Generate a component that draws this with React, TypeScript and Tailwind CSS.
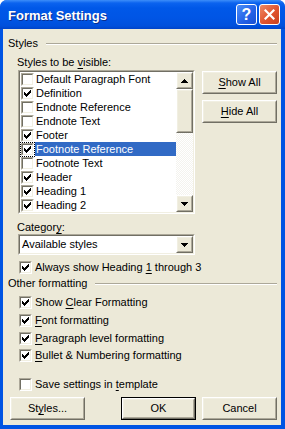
import React from "react";

const font = "font-['Liberation_Sans',Arial,sans-serif]";

function U({ children }: { children: React.ReactNode }) {
  return <span className="underline decoration-1 underline-offset-[2px]">{children}</span>;
}

function CheckMark() {
  return (
    <svg width="7" height="7" viewBox="0 0 7 7" shapeRendering="crispEdges">
      <path
        d="M0 2h1v3h-1z M1 3h1v3h-1z M2 4h1v3h-1z M3 3h1v3h-1z M4 2h1v3h-1z M5 1h1v3h-1z M6 0h1v3h-1z"
        fill="#000"
      />
    </svg>
  );
}

function Arrow({ up }: { up?: boolean }) {
  return (
    <svg width="7" height="4" viewBox="0 0 7 4" shapeRendering="crispEdges">
      <path
        d={up ? "M3 0h1v1h-1z M2 1h3v1h-3z M1 2h5v1h-5z M0 3h7v1h-7z" : "M0 0h7v1h-7z M1 1h5v1h-5z M2 2h3v1h-3z M3 3h1v1h-1z"}
        fill="#000"
      />
    </svg>
  );
}

function Checkbox({ checked }: { checked?: boolean }) {
  return (
    <div className="w-[13px] h-[13px] shrink-0 border border-t-[#aca899] border-l-[#aca899] border-b-white border-r-white">
      <div className="w-full h-full border border-t-[#716f64] border-l-[#716f64] border-b-[#f1efe2] border-r-[#f1efe2] bg-white flex items-center justify-center">
        {checked && <CheckMark />}
      </div>
    </div>
  );
}

function Raised({ className, children }: { className?: string; children?: React.ReactNode }) {
  return (
    <div className={`border border-t-white border-l-white border-b-[#716f64] border-r-[#716f64] bg-[#ece9d8] ${className ?? ""}`}>
      <div className="w-full h-full border border-t-[#f1efe2] border-l-[#f1efe2] border-b-[#aca899] border-r-[#aca899] flex items-center justify-center">
        {children}
      </div>
    </div>
  );
}

function Button({ children, def, className }: { children: React.ReactNode; def?: boolean; className?: string }) {
  if (def) {
    return (
      <div className={`w-[75px] h-[23px] border border-black ${className ?? ""}`}>
        <Raised className="w-full h-full">{children}</Raised>
      </div>
    );
  }
  return <Raised className={`w-[75px] h-[23px] ${className ?? ""}`}>{children}</Raised>;
}

function GroupHeader({ label }: { label: string }) {
  return (
    <div className="flex items-center h-[13px] leading-[13px]">
      <span>{label}</span>
      <div className="flex-1 ml-[8px] flex flex-col">
        <div className="h-px bg-[#aca899]" />
        <div className="h-px bg-white" />
      </div>
    </div>
  );
}

function CheckRow({ checked, children, className }: { checked?: boolean; children: React.ReactNode; className?: string }) {
  return (
    <div className={`flex items-center h-[13px] ml-[11px] ${className ?? ""}`}>
      <Checkbox checked={checked} />
      <span className="ml-[3px] leading-[13px]">{children}</span>
    </div>
  );
}

const styles = [
  { name: "Default Paragraph Font", on: false },
  { name: "Definition", on: true },
  { name: "Endnote Reference", on: false },
  { name: "Endnote Text", on: false },
  { name: "Footer", on: true },
  { name: "Footnote Reference", on: true, sel: true },
  { name: "Footnote Text", on: false },
  { name: "Header", on: true },
  { name: "Heading 1", on: true },
  { name: "Heading 2", on: true },
];

export default function App() {
  return (
    <div className={`w-[285px] h-[429px] flex flex-col rounded-t-[7px] overflow-hidden bg-[#0054e3] ${font} text-[11px] text-black`}>
      {/* title bar */}
      <div className="h-[29px] shrink-0 flex items-center pl-[8px] pr-[5px] bg-[linear-gradient(to_bottom,#3d8ef9_0px,#0b63ef_3px,#0058e8_8px,#0055e5_18px,#0050dc_26px,#0043c8_29px)]">
        <span className="text-white font-bold text-[13px] leading-none pt-[1px] [text-shadow:1px_1px_0_#0a2f8f]">
          Format Settings
        </span>
        <div className="ml-auto flex gap-[2px]">
          <div className="w-[21px] h-[21px] rounded-[3px] border border-white bg-[linear-gradient(135deg,#4c8ff8,#2260e6_60%,#1a4fd2)] flex items-center justify-center text-white font-bold text-[16px] leading-none">
            ?
          </div>
          <div className="w-[21px] h-[21px] rounded-[3px] border border-white bg-[linear-gradient(135deg,#ee8a66,#e0532e_55%,#c8401e)] flex items-center justify-center">
            <svg width="11" height="11" viewBox="0 0 11 11">
              <path d="M1.5 1.5 L9.5 9.5 M9.5 1.5 L1.5 9.5" stroke="#fff" strokeWidth="2.2" strokeLinecap="square" />
            </svg>
          </div>
        </div>
      </div>

      {/* client */}
      <div className="flex-1 pl-[3px] pr-[4px] pb-[4px] flex flex-col">
        <div className="flex-1 bg-[#ece9d8] pl-[5px] pr-[4px] pt-[8px] flex flex-col">
          <GroupHeader label="Styles" />

          <div className="ml-[9px] mt-[6px] h-[13px] leading-[13px]">
            Styles to be <U>v</U>isible:
          </div>

          <div className="flex mt-[1px] ml-[10px]">
            {/* listbox */}
            <div className="w-[177px] h-[144px] border border-t-[#aca899] border-l-[#aca899] border-b-white border-r-white">
              <div className="w-full h-full border border-t-[#716f64] border-l-[#716f64] border-b-[#f1efe2] border-r-[#f1efe2] bg-white flex">
                <div className="flex-1 flex flex-col">
                  {styles.map((s) => (
                    <div key={s.name} className="h-[14px] flex items-center">
                      <div className={`ml-[1px] flex items-center ${s.sel ? "outline-1 outline-dotted outline-black" : ""}`}>
                        <Checkbox checked={s.on} />
                      </div>
                      <div
                        className={`ml-[1px] flex-1 h-[14px] pl-[1px] leading-[14px] whitespace-nowrap ${
                          s.sel ? "bg-[#316ac5] text-white" : ""
                        }`}
                      >
                        {s.name}
                      </div>
                    </div>
                  ))}
                </div>
                {/* scrollbar */}
                <div className="w-[17px] flex flex-col bg-[repeating-conic-gradient(#f4f3ee_0_25%,#ffffff_0_50%)] bg-[length:2px_2px]">
                  <Raised className="w-[17px] h-[17px] shrink-0">
                    <Arrow up />
                  </Raised>
                  <Raised className="w-[17px] h-[44px] shrink-0" />
                  <div className="flex-1" />
                  <Raised className="w-[17px] h-[17px] shrink-0">
                    <Arrow />
                  </Raised>
                </div>
              </div>
            </div>

            <div className="ml-[7px] mt-[1px] flex flex-col gap-[6px]">
              <Button>
                <U>S</U>how All
              </Button>
              <Button>
                <U>H</U>ide All
              </Button>
            </div>
          </div>

          <div className="ml-[9px] mt-[7px] h-[13px] leading-[13px]">
            Categor<U>y</U>:
          </div>

          {/* combobox */}
          <div className="ml-[10px] w-[177px] h-[21px] border border-t-[#aca899] border-l-[#aca899] border-b-white border-r-white">
            <div className="w-full h-full border border-t-[#716f64] border-l-[#716f64] border-b-[#f1efe2] border-r-[#f1efe2] bg-white flex items-center">
              <span className="flex-1 pl-[2px] leading-[13px]">Available styles</span>
              <Raised className="w-[17px] h-[17px]">
                <Arrow />
              </Raised>
            </div>
          </div>

          <CheckRow checked className="mt-[6px]">
            Always show Heading <U>1</U> through 3
          </CheckRow>

          <div className="mt-[3px]">
            <GroupHeader label="Other formatting" />
          </div>

          <CheckRow checked className="mt-[6px]">
            Show <U>C</U>lear Formatting
          </CheckRow>
          <CheckRow checked className="mt-[5px]">
            <U>F</U>ont formatting
          </CheckRow>
          <CheckRow checked className="mt-[5px]">
            <U>P</U>aragraph level formatting
          </CheckRow>
          <CheckRow checked className="mt-[4px]">
            <U>B</U>ullet &amp; Numbering formatting
          </CheckRow>

          <CheckRow className="mt-[16px]">
            Save settings in <U>t</U>emplate
          </CheckRow>

          <div className="flex mt-[6px] ml-[2px]">
            <Button>
              St<U>y</U>les...
            </Button>
            <Button def className="ml-[36px]">
              OK
            </Button>
            <Button className="ml-[6px]">Cancel</Button>
          </div>
        </div>
      </div>
    </div>
  );
}
